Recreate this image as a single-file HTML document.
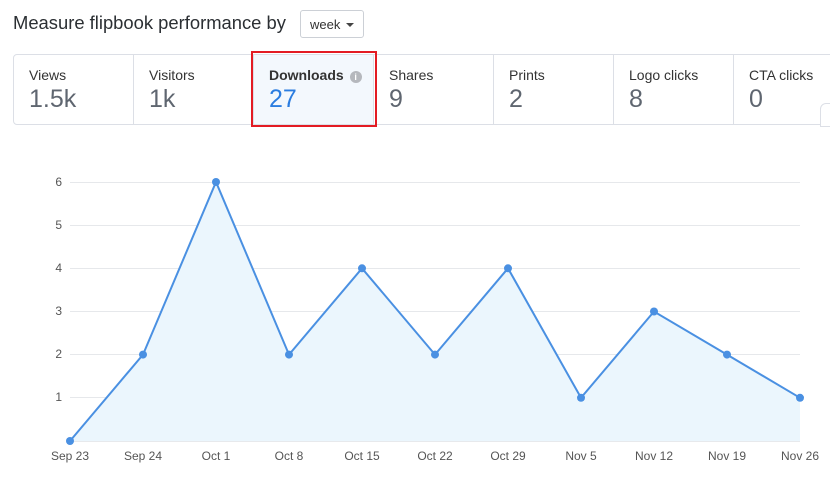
<!DOCTYPE html>
<html><head><meta charset="utf-8"><style>
*{box-sizing:border-box;margin:0;padding:0}
body{width:830px;height:480px;overflow:hidden;background:#fff;font-family:"Liberation Sans",Arial,sans-serif;position:relative}
.title{position:absolute;left:13px;top:12px;font-size:18.4px;color:#2b2f33}
.sel{position:absolute;left:300px;top:10px;width:64px;height:28px;border:1px solid #ccd0d6;border-radius:3px;font-size:13px;color:#333;padding:6px 0 0 9px}
.sel:after{content:"";position:absolute;left:45px;top:12px;border-left:4px solid transparent;border-right:4px solid transparent;border-top:4px solid #444}
.card{position:absolute;left:13px;top:54px;width:830px;height:71px;border:1px solid #dcdfe6;border-radius:4px}
.c{position:absolute;top:0;height:69px;width:120px;border-right:1px solid #dcdfe6;padding:12px 0 0 15px}
.c .l{font-size:14px;color:#333}
.c .v{font-size:25px;color:#5f6670;margin-top:2px}
.sel2{background:#f3f8fd}
.sel2 .v{color:#2b7de0}
.red{position:absolute;left:251px;top:51px;width:126px;height:76px;border:2px solid #e31b23}
.info{display:inline-block;width:12px;height:12px;border-radius:50%;background:#b5b8bd;color:#fff;font-size:9px;font-weight:bold;text-align:center;line-height:12px;margin-left:6px;vertical-align:0}
.tab{position:absolute;left:820px;top:103px;width:20px;height:24px;border:1px solid #dcdfe6;border-radius:6px 0 0 0;background:#fff}
</style></head><body>
<div class="title">Measure flipbook performance by</div>
<div class="sel">week</div>
<div class="card">
<div class="c" style="left:0">
<div class="l">Views</div><div class="v">1.5k</div></div>
<div class="c" style="left:120px"><div class="l">Visitors</div><div class="v">1k</div></div>
<div class="c sel2" style="left:240px"><div class="l" style="font-weight:bold;color:#333">Downloads<span class="info">i</span></div><div class="v">27</div></div>
<div class="c" style="left:360px"><div class="l">Shares</div><div class="v">9</div></div>
<div class="c" style="left:480px"><div class="l">Prints</div><div class="v">2</div></div>
<div class="c" style="left:600px"><div class="l">Logo clicks</div><div class="v">8</div></div>
<div class="c" style="left:720px"><div class="l">CTA clicks</div><div class="v">0</div></div>
</div>
<div class="red"></div>
<div class="tab"></div>
<svg style="position:absolute;left:0;top:0" width="830" height="480" font-family="Liberation Sans,Arial,sans-serif" font-size="12" fill="#555">
<g stroke="#e6e8eb" stroke-width="1">
<line x1="70" x2="800" y1="182.5" y2="182.5"/><line x1="70" x2="800" y1="225.5" y2="225.5"/><line x1="70" x2="800" y1="268.5" y2="268.5"/><line x1="70" x2="800" y1="311.5" y2="311.5"/><line x1="70" x2="800" y1="354.5" y2="354.5"/><line x1="70" x2="800" y1="397.5" y2="397.5"/>
</g>
<line x1="70" x2="800" y1="441" y2="441" stroke="#cfd3d8"/>
<g text-anchor="end"><text x="62" y="186">6</text><text x="62" y="229">5</text><text x="62" y="272">4</text><text x="62" y="315">3</text><text x="62" y="358">2</text><text x="62" y="401">1</text></g>
<polygon points="70,441 143,354.6 216,182 289,354.6 362,268.3 435,354.6 508,268.3 581,397.8 654,311.5 727,354.6 800,397.8 800,441" fill="#ebf6fd"/>
<polyline points="70,441 143,354.6 216,182 289,354.6 362,268.3 435,354.6 508,268.3 581,397.8 654,311.5 727,354.6 800,397.8" fill="none" stroke="#4a90e2" stroke-width="2"/>
<g fill="#4a90e2"><circle cx="70" cy="441" r="4"/><circle cx="143" cy="354.6" r="4"/><circle cx="216" cy="182" r="4"/><circle cx="289" cy="354.6" r="4"/><circle cx="362" cy="268.3" r="4"/><circle cx="435" cy="354.6" r="4"/><circle cx="508" cy="268.3" r="4"/><circle cx="581" cy="397.8" r="4"/><circle cx="654" cy="311.5" r="4"/><circle cx="727" cy="354.6" r="4"/><circle cx="800" cy="397.8" r="4"/></g>
<g text-anchor="middle"><text x="70" y="460">Sep 23</text><text x="143" y="460">Sep 24</text><text x="216" y="460">Oct 1</text><text x="289" y="460">Oct 8</text><text x="362" y="460">Oct 15</text><text x="435" y="460">Oct 22</text><text x="508" y="460">Oct 29</text><text x="581" y="460">Nov 5</text><text x="654" y="460">Nov 12</text><text x="727" y="460">Nov 19</text><text x="800" y="460">Nov 26</text></g>
</svg>
</body></html>
